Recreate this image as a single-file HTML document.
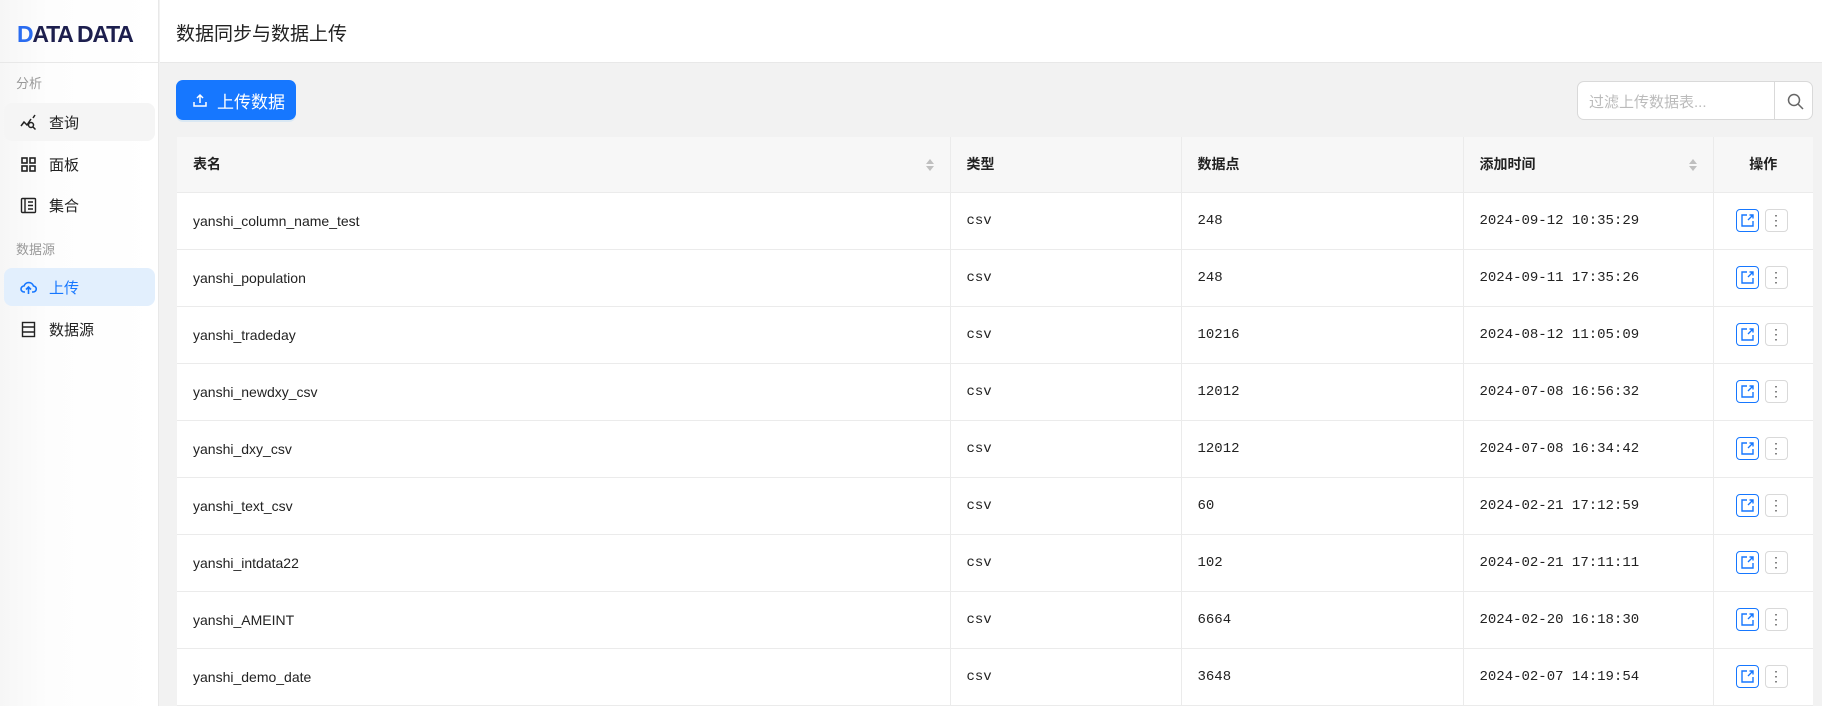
<!DOCTYPE html>
<html><head><meta charset="utf-8"><style>
*{box-sizing:border-box;margin:0;padding:0}
body{width:1822px;height:706px;overflow:hidden;font-family:"Liberation Sans","Noto Sans CJK SC",sans-serif;background:#f2f2f2;position:relative;color:#222}
.side{position:absolute;left:0;top:0;width:159px;height:706px;background:linear-gradient(90deg,#f6f6f6,#fdfdfd 30%,#fff);border-right:1px solid #e8e8e8}
.logo{position:absolute;left:17px;top:21px;font-weight:bold;font-size:23px;color:#1d1f4e;letter-spacing:-1.2px;white-space:nowrap}
.logo .i{color:#2a6cf0}
.sh{position:absolute;left:0;top:0;width:159px;height:63px;border-bottom:1px solid #e8e8e8}
.lab{position:absolute;left:16px;font-size:13px;color:#999}
.mi{position:absolute;left:4px;width:151px;height:38px;border-radius:8px;font-size:15px;display:flex;align-items:center;padding-left:16px;color:#222}
.mi svg{margin-right:12px}
.top{position:absolute;left:160px;top:0;right:0;height:63px;background:#fff;border-bottom:1px solid #e8e8e8;font-size:19px;padding:19px 0 0 16px;color:#222}
.btn{position:absolute;left:176px;top:80px;width:120px;height:40px;background:#1677ff;border-radius:7px;color:#fff;font-size:17px;display:flex;align-items:center;padding-left:17px;box-shadow:0 2px 0 rgba(5,145,255,.1)}
.btn svg{margin-right:10px}
.search{position:absolute;left:1577px;top:81px;width:236px;height:39px;background:#fff;border:1px solid #d9d9d9;border-radius:7px}
.search span{position:absolute;left:11px;top:9px;font-size:15px;color:#bbb}
.search .d{position:absolute;left:196px;top:0;width:1px;height:37px;background:#d9d9d9}
table{position:absolute;left:177px;top:137px;width:1636px;border-collapse:collapse;background:#fff;font-size:14px}
th{height:55px;background:#f7f7f7;text-align:left;font-weight:bold;padding-left:16px;border-bottom:1px solid #ebebeb;position:relative}
th+th,td+td{border-left:1px solid #ebebeb}
td{height:57px;padding-left:16px;border-bottom:1px solid #ebebeb}
.m{font-family:"Liberation Mono",monospace;font-size:14px}
.sort{position:absolute;right:16px;top:22px;width:8px}
.sort:before,.sort:after{content:"";position:absolute;left:0;border-left:4px solid transparent;border-right:4px solid transparent}
.sort:before{top:0;border-bottom:5px solid #bfbfbf}.sort:after{top:7px;border-top:5px solid #bfbfbf}
.ops{padding-left:22px}
.b1,.b2{display:inline-block;width:23px;height:23px;border-radius:4px;vertical-align:middle;position:relative}
.b1{border:1px solid #1677ff}
.b2{border:1px solid #d9d9d9;margin-left:6px}
.b2:before{content:"⋮";position:absolute;left:0;right:0;text-align:center;top:2px;font-size:14px;color:#555}
</style></head><body>
<div class="side">
<div class="sh"></div>
<div class="logo"><span class="i">D</span>ATA DATA</div>
<div class="lab" style="top:73px">分析</div>
<div class="mi" style="top:103px;background:#f5f5f5"><svg width="17" height="17" viewBox="0 0 17 17" fill="none" stroke="#222" stroke-width="1.5"><path d="M1 12l3-4 3 3 4-6M13 4l2-3"/><circle cx="11" cy="11" r="2.5"/><path d="M13 13l2.5 2.5"/></svg>查询</div>
<div class="mi" style="top:145px"><svg width="17" height="17" viewBox="0 0 17 17" fill="none" stroke="#222" stroke-width="1.6"><rect x="2" y="2" width="5" height="5"/><rect x="10" y="2" width="5" height="5"/><rect x="2" y="10" width="5" height="5"/><rect x="10" y="10" width="5" height="5"/></svg>面板</div>
<div class="mi" style="top:186px"><svg width="17" height="17" viewBox="0 0 17 17" fill="none" stroke="#222" stroke-width="1.4"><rect x="1.5" y="1.5" width="14" height="14" rx="1"/><path d="M5 1.5v14M8 5h5M8 8.5h5M8 12h5"/></svg>集合</div>
<div class="lab" style="top:239px">数据源</div>
<div class="mi" style="top:268px;background:#e2effd;color:#1677ff"><svg width="17" height="17" viewBox="0 0 17 17" fill="none" stroke="#1677ff" stroke-width="1.6"><path d="M5 13H4a3 3 0 0 1 0-6 5 5 0 0 1 9.5 0A3 3 0 0 1 13 13h-1"/><path d="M8.5 15V8M6 10.5l2.5-2.5 2.5 2.5"/></svg>上传</div>
<div class="mi" style="top:310px"><svg width="17" height="17" viewBox="0 0 17 17" fill="none" stroke="#222" stroke-width="1.4"><rect x="2.5" y="1.5" width="12" height="14"/><path d="M2.5 6h12M2.5 11h12"/></svg>数据源</div>
</div>
<div class="top">数据同步与数据上传</div>
<div class="btn"><svg width="14" height="14" viewBox="0 0 14 14" fill="none" stroke="#fff" stroke-width="1.5"><path d="M7 10V2M4 5l3-3 3 3M1 9v4h12V9"/></svg>上传数据</div>
<div class="search"><span>过滤上传数据表...</span><div class="d"></div><svg style="position:absolute;left:209px;top:11px" width="17" height="17" viewBox="0 0 17 17" fill="none" stroke="#666" stroke-width="1.5"><circle cx="7" cy="7" r="5.5"/><path d="M11 11l5 5"/></svg></div>
<table>
<tr><th style="width:773px">表名<i class="sort"></i></th><th style="width:231px">类型</th><th style="width:282px">数据点</th><th style="width:250px">添加时间<i class="sort"></i></th><th style="text-align:center;padding-left:0">操作</th></tr>
<tr><td>yanshi_column_name_test</td><td class="m">csv</td><td class="m">248</td><td class="m">2024-09-12 10:35:29</td><td class="ops"><span class="b1"><svg width="21" height="21" viewBox="0 0 21 21" fill="none" stroke="#1677ff" stroke-width="1.4"><path d="M10 5H5v11h11v-5M11 10l5-5M12.5 5H16v3.5"/></svg></span><span class="b2"></span></td></tr>
<tr><td>yanshi_population</td><td class="m">csv</td><td class="m">248</td><td class="m">2024-09-11 17:35:26</td><td class="ops"><span class="b1"><svg width="21" height="21" viewBox="0 0 21 21" fill="none" stroke="#1677ff" stroke-width="1.4"><path d="M10 5H5v11h11v-5M11 10l5-5M12.5 5H16v3.5"/></svg></span><span class="b2"></span></td></tr>
<tr><td>yanshi_tradeday</td><td class="m">csv</td><td class="m">10216</td><td class="m">2024-08-12 11:05:09</td><td class="ops"><span class="b1"><svg width="21" height="21" viewBox="0 0 21 21" fill="none" stroke="#1677ff" stroke-width="1.4"><path d="M10 5H5v11h11v-5M11 10l5-5M12.5 5H16v3.5"/></svg></span><span class="b2"></span></td></tr>
<tr><td>yanshi_newdxy_csv</td><td class="m">csv</td><td class="m">12012</td><td class="m">2024-07-08 16:56:32</td><td class="ops"><span class="b1"><svg width="21" height="21" viewBox="0 0 21 21" fill="none" stroke="#1677ff" stroke-width="1.4"><path d="M10 5H5v11h11v-5M11 10l5-5M12.5 5H16v3.5"/></svg></span><span class="b2"></span></td></tr>
<tr><td>yanshi_dxy_csv</td><td class="m">csv</td><td class="m">12012</td><td class="m">2024-07-08 16:34:42</td><td class="ops"><span class="b1"><svg width="21" height="21" viewBox="0 0 21 21" fill="none" stroke="#1677ff" stroke-width="1.4"><path d="M10 5H5v11h11v-5M11 10l5-5M12.5 5H16v3.5"/></svg></span><span class="b2"></span></td></tr>
<tr><td>yanshi_text_csv</td><td class="m">csv</td><td class="m">60</td><td class="m">2024-02-21 17:12:59</td><td class="ops"><span class="b1"><svg width="21" height="21" viewBox="0 0 21 21" fill="none" stroke="#1677ff" stroke-width="1.4"><path d="M10 5H5v11h11v-5M11 10l5-5M12.5 5H16v3.5"/></svg></span><span class="b2"></span></td></tr>
<tr><td>yanshi_intdata22</td><td class="m">csv</td><td class="m">102</td><td class="m">2024-02-21 17:11:11</td><td class="ops"><span class="b1"><svg width="21" height="21" viewBox="0 0 21 21" fill="none" stroke="#1677ff" stroke-width="1.4"><path d="M10 5H5v11h11v-5M11 10l5-5M12.5 5H16v3.5"/></svg></span><span class="b2"></span></td></tr>
<tr><td>yanshi_AMEINT</td><td class="m">csv</td><td class="m">6664</td><td class="m">2024-02-20 16:18:30</td><td class="ops"><span class="b1"><svg width="21" height="21" viewBox="0 0 21 21" fill="none" stroke="#1677ff" stroke-width="1.4"><path d="M10 5H5v11h11v-5M11 10l5-5M12.5 5H16v3.5"/></svg></span><span class="b2"></span></td></tr>
<tr><td>yanshi_demo_date</td><td class="m">csv</td><td class="m">3648</td><td class="m">2024-02-07 14:19:54</td><td class="ops"><span class="b1"><svg width="21" height="21" viewBox="0 0 21 21" fill="none" stroke="#1677ff" stroke-width="1.4"><path d="M10 5H5v11h11v-5M11 10l5-5M12.5 5H16v3.5"/></svg></span><span class="b2"></span></td></tr>
</table>
</body></html>
